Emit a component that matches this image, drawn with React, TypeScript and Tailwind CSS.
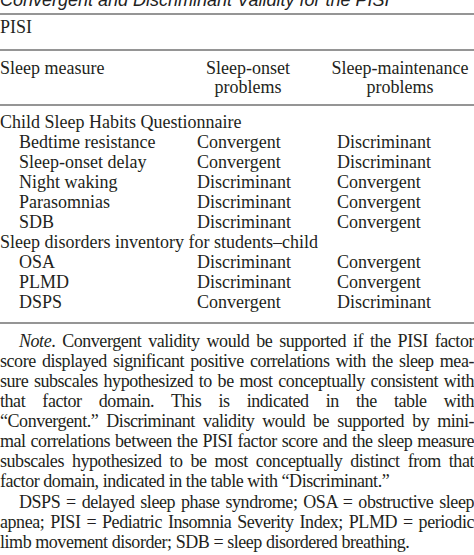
import React from "react";

type Row = { label: string; a?: string; b?: string; sub?: boolean };

const rows: Row[] = [
  { label: "Child Sleep Habits Questionnaire" },
  { label: "Bedtime resistance", a: "Convergent", b: "Discriminant", sub: true },
  { label: "Sleep-onset delay", a: "Convergent", b: "Discriminant", sub: true },
  { label: "Night waking", a: "Discriminant", b: "Convergent", sub: true },
  { label: "Parasomnias", a: "Discriminant", b: "Convergent", sub: true },
  { label: "SDB", a: "Discriminant", b: "Convergent", sub: true },
  { label: "Sleep disorders inventory for students–child" },
  { label: "OSA", a: "Discriminant", b: "Convergent", sub: true },
  { label: "PLMD", a: "Discriminant", b: "Convergent", sub: true },
  { label: "DSPS", a: "Convergent", b: "Discriminant", sub: true },
];

function Rule() {
  return <div className="h-[2px] bg-[#959595]" />;
}

function J({ children, last, indent }: { children: React.ReactNode; last?: boolean; indent?: boolean }) {
  return (
    <div
      className={
        "whitespace-nowrap h-[20px] " +
        (last ? "text-left " : "text-justify [text-align-last:justify] ") +
        (indent ? "pl-[19px]" : "")
      }
    >
      {children}
    </div>
  );
}

export default function App() {
  return (
    <div className="w-[474px] h-[555px] overflow-hidden bg-white text-[#231f20] [font-family:'Liberation_Serif',serif] text-[18px] leading-[20px]">
      <div className="h-[13px] flex items-end pb-[4px]">
        <div className="[font-family:'Liberation_Sans',sans-serif] italic text-[18px] leading-[18px] whitespace-nowrap text-[#222]">
          Convergent and Discriminant Validity for the PISI
        </div>
      </div>
      <Rule />
      <div className="h-[34px] pt-[2px]">PISI</div>
      <Rule />
      <div className="h-[53px] pt-[8px] grid grid-cols-[170px_156px_1fr] leading-[19px]">
        <div>Sleep measure</div>
        <div className="text-center">
          Sleep-onset
          <br />
          problems
        </div>
        <div className="text-center whitespace-nowrap">
          Sleep-maintenance
          <br />
          problems
        </div>
      </div>
      <Rule />
      <div className="pt-[6px] pb-[10px]">
        {rows.map((r) => (
          <div key={r.label} className="grid grid-cols-[197px_140px_1fr] h-[20px] whitespace-nowrap">
            <div className={r.sub ? "pl-[19px]" : ""}>{r.label}</div>
            <div>{r.a ?? ""}</div>
            <div>{r.b ?? ""}</div>
          </div>
        ))}
      </div>
      <Rule />
      <div className="pt-[7px] tracking-[-0.45px]">
        <J indent>
          <i>Note</i>. Convergent validity would be supported if the PISI factor
        </J>
        <J>score displayed significant positive correlations with the sleep mea-</J>
        <J>sure subscales hypothesized to be most conceptually consistent with</J>
        <J>that factor domain. This is indicated in the table with</J>
        <J>“Convergent.” Discriminant validity would be supported by mini-</J>
        <J>mal correlations between the PISI factor score and the sleep measure</J>
        <J>subscales hypothesized to be most conceptually distinct from that</J>
        <J last>factor domain, indicated in the table with “Discriminant.”</J>
        <div className="h-[1px]" />
        <J indent>DSPS = delayed sleep phase syndrome; OSA = obstructive sleep</J>
        <J>apnea; PISI = Pediatric Insomnia Severity Index; PLMD = periodic</J>
        <J last>limb movement disorder; SDB = sleep disordered breathing.</J>
      </div>
    </div>
  );
}
